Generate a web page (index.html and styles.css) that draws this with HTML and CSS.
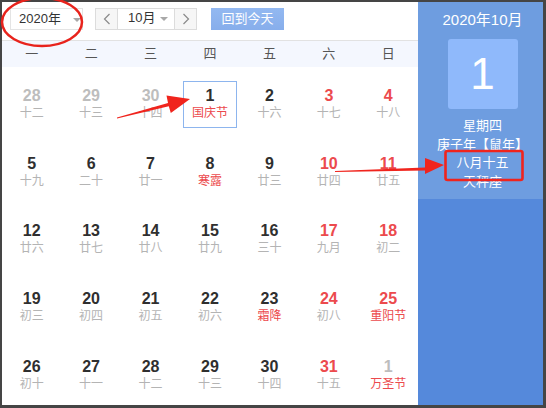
FILE: index.html
```html
<!DOCTYPE html>
<html lang="zh-CN">
<head>
<meta charset="UTF-8">
<title>万年历</title>
<link rel="stylesheet" href="styles.css">
</head>
<body>
<div class="cal">
	<div class="main">
		<div class="toolbar">
			<div class="sel year">2020年<i class="tri"></i></div>
			<div class="month-box">
				<span class="nav"><svg width="8" height="12" viewBox="0 0 8 12"><path d="M6.5 1 L1.5 6 L6.5 11" fill="none" stroke="#8a8a8a" stroke-width="1.2"/></svg></span>
				<div class="sel month">10月<i class="tri"></i></div>
				<span class="nav"><svg width="8" height="12" viewBox="0 0 8 12"><path d="M1.5 1 L6.5 6 L1.5 11" fill="none" stroke="#8a8a8a" stroke-width="1.2"/></svg></span>
			</div>
			<a class="today">回到今天</a>
		</div>
		<ul class="weekdays">
			<li>一</li><li>二</li><li>三</li><li>四</li><li>五</li><li>六</li><li>日</li>
		</ul>
		<ul class="days">
			<li><div class="day other"><b>28</b><span>十二</span></div></li>
			<li><div class="day other"><b>29</b><span>十三</span></div></li>
			<li><div class="day other"><b>30</b><span>十四</span></div></li>
			<li><div class="day cur"><b>1</b><span class="fest">国庆节</span></div></li>
			<li><div class="day"><b>2</b><span>十六</span></div></li>
			<li><div class="day wk"><b>3</b><span>十七</span></div></li>
			<li><div class="day wk"><b>4</b><span>十八</span></div></li>

			<li><div class="day"><b>5</b><span>十九</span></div></li>
			<li><div class="day"><b>6</b><span>二十</span></div></li>
			<li><div class="day"><b>7</b><span>廿一</span></div></li>
			<li><div class="day"><b>8</b><span class="fest">寒露</span></div></li>
			<li><div class="day"><b>9</b><span>廿三</span></div></li>
			<li><div class="day wk"><b>10</b><span>廿四</span></div></li>
			<li><div class="day wk"><b>11</b><span>廿五</span></div></li>

			<li><div class="day"><b>12</b><span>廿六</span></div></li>
			<li><div class="day"><b>13</b><span>廿七</span></div></li>
			<li><div class="day"><b>14</b><span>廿八</span></div></li>
			<li><div class="day"><b>15</b><span>廿九</span></div></li>
			<li><div class="day"><b>16</b><span>三十</span></div></li>
			<li><div class="day wk"><b>17</b><span>九月</span></div></li>
			<li><div class="day wk"><b>18</b><span>初二</span></div></li>

			<li><div class="day"><b>19</b><span>初三</span></div></li>
			<li><div class="day"><b>20</b><span>初四</span></div></li>
			<li><div class="day"><b>21</b><span>初五</span></div></li>
			<li><div class="day"><b>22</b><span>初六</span></div></li>
			<li><div class="day"><b>23</b><span class="fest">霜降</span></div></li>
			<li><div class="day wk"><b>24</b><span>初八</span></div></li>
			<li><div class="day wk"><b>25</b><span class="fest">重阳节</span></div></li>

			<li><div class="day"><b>26</b><span>初十</span></div></li>
			<li><div class="day"><b>27</b><span>十一</span></div></li>
			<li><div class="day"><b>28</b><span>十二</span></div></li>
			<li><div class="day"><b>29</b><span>十三</span></div></li>
			<li><div class="day"><b>30</b><span>十四</span></div></li>
			<li><div class="day wk"><b>31</b><span>十五</span></div></li>
			<li><div class="day other"><b>1</b><span class="fest">万圣节</span></div></li>
		</ul>
	</div>
	<div class="side">
		<div class="side-top">
			<p class="ym">2020年10月</p>
			<div class="big">1</div>
			<p class="info">星期四</p>
			<p class="info">庚子年【鼠年】</p>
			<p class="info">八月十五</p>
			<p class="info">天秤座</p>
		</div>
	</div>
	<!-- red marks drawn over the calendar -->
	<svg class="marks" width="546" height="408" viewBox="0 0 546 408">
		<ellipse cx="42" cy="22" rx="40" ry="24" fill="none" stroke="#e8231c" stroke-width="2.5"/>
		<polygon points="117,117.5 168,103 166.5,95.6 190,99 170.8,113 168.8,106.2 117,118.5" fill="#f0241d"/>
		<polygon points="335,171 425,167.5 425,158 444,165 425,174 425,170.5 335,172" fill="#f0241d"/>
		<rect x="445.5" y="151" width="77" height="29" rx="2" fill="none" stroke="#f0241d" stroke-width="2.6"/>
	</svg>
</div>
</body>
</html>
```

FILE: styles.css
```css
*{margin:0;padding:0;list-style:none;box-sizing:border-box;}
body{background:#454545;font-family:"Liberation Sans","Noto Sans CJK SC",sans-serif;}
.cal{position:relative;display:flex;width:546px;height:408px;padding:2px 3px 3px 2px;}
.main{display:flex;flex-direction:column;width:416px;background:#fff;}

.toolbar{display:flex;align-items:flex-start;height:39px;padding:6px 0 0 8px;border-bottom:1px solid #e2e2e2;font-size:13px;color:#333;}
.sel{position:relative;height:22px;line-height:20px;padding-left:8px;border:1px solid #e4e4e4;background:#fff;}
.sel .tri{position:absolute;top:9px;width:0;height:0;border-left:4px solid transparent;border-right:4px solid transparent;border-top:4px solid #a8a8a8;}
.year{width:73px;}
.year .tri{right:1px;}
.month-box{display:flex;margin-left:12px;height:22px;border:1px solid #dcdcdc;}
.month-box .sel{width:58px;height:20px;line-height:18px;border:none;border-left:1px solid #dcdcdc;border-right:1px solid #dcdcdc;padding-left:10px;}
.month .tri{right:6px;top:8px;}
.nav{display:flex;align-items:center;justify-content:center;width:21px;height:20px;background:#f6f6f6;}
.today{display:block;margin-left:14px;width:73px;height:22px;line-height:22px;text-align:center;white-space:nowrap;color:#fff;background:linear-gradient(#93b9f1,#87aeeb);}

.weekdays{display:grid;grid-template-columns:repeat(7,1fr);height:26px;background:#f4f7fe;}
.weekdays li{text-align:center;line-height:26px;font-size:13px;color:#555;}

.days{flex:1;display:grid;grid-template-columns:repeat(7,1fr);grid-template-rows:repeat(5,1fr);}
.days li{display:flex;align-items:center;justify-content:center;}
.day{display:flex;flex-direction:column;align-items:center;justify-content:center;width:54px;height:47px;margin-top:7px;border:1px solid transparent;}
.day b{font-size:16px;line-height:18px;color:#2f2f2f;}
.day span{font-size:12px;line-height:16px;color:#b4b4b4;}
.day.wk b{color:#ec4a4d;}
.day.other b{color:#bdbdbd;}
.day span.fest{color:#ec4a4d;}
.day.cur{border-color:#8db5ee;}

.side{flex:1;background:#5589db;}
.side-top{height:197px;padding:8px 0 0 4px;background:#6e9de0;color:#fff;text-align:center;}
.ym{font-size:15px;line-height:20px;}
.big{width:70px;height:70px;margin:9px auto 8px;line-height:70px;font-size:44px;background:#8fb9fb;border-radius:3px;}
.info{font-size:13px;line-height:18.5px;}

.marks{position:absolute;left:0;top:0;pointer-events:none;}
```
